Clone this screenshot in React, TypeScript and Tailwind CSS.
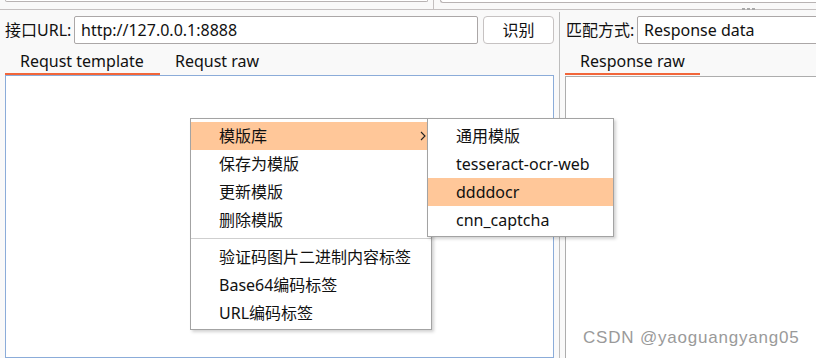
import React from "react";

const font = { fontFamily: '"Noto Sans", "Noto Sans CJK SC", sans-serif' };

function Chevron() {
  return (
    <svg width="6" height="10" viewBox="0 0 6 10" className="block">
      <path d="M1 1 L5 5 L1 9" fill="none" stroke="#222" strokeWidth="1.1" />
    </svg>
  );
}

export default function App() {
  const row = "h-[28px] flex items-center pl-[28px] text-[16px] text-[#111] whitespace-nowrap";
  return (
    <div
      className="relative w-[816px] h-[358px] overflow-hidden bg-[#f9f9f9] flex flex-col"
      style={font}
    >
      {/* top strip */}
      <div className="h-[10px] shrink-0 flex items-start border-b border-[#c4c0c0]">
        <div className="ml-[5px] w-[423px] h-[2px] bg-white border-x border-b border-[#b8b3b3] rounded-b-[3px]" />
        <div className="ml-[5px] w-px h-[9px] bg-[#c4c0c0]" />
        <div className="ml-[6px] flex-1 h-[3px] bg-white border-l border-b border-[#b8b3b3] rounded-bl-[3px]" />
      </div>
      <div className="absolute left-[742px] top-[8px] flex gap-[2px]">
        <div className="w-[3px] h-[2px] bg-[#a8a8a8]" />
        <div className="w-[3px] h-[2px] bg-[#a8a8a8]" />
        <div className="w-[3px] h-[2px] bg-[#a8a8a8]" />
      </div>

      {/* main */}
      <div className="flex-1 flex min-h-0">
        {/* left pane */}
        <div className="w-[559px] shrink-0 flex flex-col pl-[5px] pr-[5px] pt-[6px]">
          <div className="h-[28px] flex items-center shrink-0">
            <div className="w-[69px] text-[16px] text-[#111] whitespace-nowrap">接口URL:</div>
            <div className="w-[404px] h-[28px] bg-white border border-[#aba7a7] rounded-[2px] flex items-center pl-[6px] text-[16px] text-[#111]">
              http://127.0.0.1:8888
            </div>
            <div className="ml-[5px] w-[71px] h-[28px] bg-white border border-[#c6c2c2] rounded-[4px] flex items-center justify-center text-[16px] text-[#111]">
              识别
            </div>
          </div>
          <div className="h-[31px] shrink-0 flex">
            <div className="w-[155px] h-[31px] border-b-2 border-[#f2663a] pt-[5px] flex items-center pl-[15px] text-[16px] text-[#111] whitespace-nowrap">
              Requst template
            </div>
            <div className="h-[31px] pt-[5px] pb-[2px] flex items-center pl-[15px] text-[16px] text-[#111] whitespace-nowrap">
              Requst raw
            </div>
          </div>
          <div className="flex-1 bg-white border border-[#8bacd9]" />
        </div>
        {/* divider */}
        <div className="w-px shrink-0 bg-[#bdbdbd] mt-[2px]" />
        {/* right pane */}
        <div className="flex-1 flex flex-col pl-[5px] pt-[6px] min-w-0 overflow-hidden">
          <div className="h-[28px] flex items-center shrink-0">
            <div className="w-[72px] shrink-0 pl-[1px] text-[16px] text-[#111] whitespace-nowrap">匹配方式:</div>
            <div className="w-[240px] shrink-0 h-[28px] bg-white border border-[#aba7a7] rounded-l-[2px] flex items-center pl-[6px] text-[16px] text-[#111] whitespace-nowrap">
              Response data
            </div>
          </div>
          <div className="h-[31px] shrink-0 flex">
            <div className="w-[135px] h-[31px] border-b-2 border-[#f2663a] pt-[5px] flex items-center pl-[15px] text-[16px] text-[#111] whitespace-nowrap">
              Response raw
            </div>
          </div>
          <div className="flex-1 bg-white border-t border-l border-[#adadad] mt-[1px]" />
        </div>
      </div>

      {/* context menu */}
      <div className="absolute left-[190px] top-[118px] w-[242px] bg-white border border-[#a3a3a3] pt-[3px] pb-[2px] shadow-[2px_2px_3px_rgba(0,0,0,0.18)]">
        <div className={row + " bg-[#ffc799] relative"}>
          模版库
          <div className="absolute left-[229px] top-[9px]">
            <Chevron />
          </div>
        </div>
        <div className={row}>保存为模版</div>
        <div className={row}>更新模版</div>
        <div className={row}>删除模版</div>
        <div className="h-[9px] flex items-center">
          <div className="w-full h-px bg-[#cfcfcf]" />
        </div>
        <div className={row}>验证码图片二进制内容标签</div>
        <div className={row}>Base64编码标签</div>
        <div className={row}>URL编码标签</div>
      </div>

      {/* submenu */}
      <div className="absolute left-[427px] top-[118px] w-[187px] bg-white border border-[#a3a3a3] pt-[3px] pb-[2px] shadow-[2px_2px_3px_rgba(0,0,0,0.18)]">
        <div className={row}>通用模版</div>
        <div className={row}>tesseract-ocr-web</div>
        <div className={row + " bg-[#ffc799]"}>ddddocr</div>
        <div className={row}>cnn_captcha</div>
      </div>

      {/* watermark */}
      <div
        className="absolute left-[583px] top-[327px] text-[17px] leading-[22px] tracking-[0.8px] text-[#9a9a9a] whitespace-nowrap"
        style={{ fontFamily: '"Liberation Sans", Arial, sans-serif' }}
      >
        CSDN @yaoguangyang05
      </div>
    </div>
  );
}
